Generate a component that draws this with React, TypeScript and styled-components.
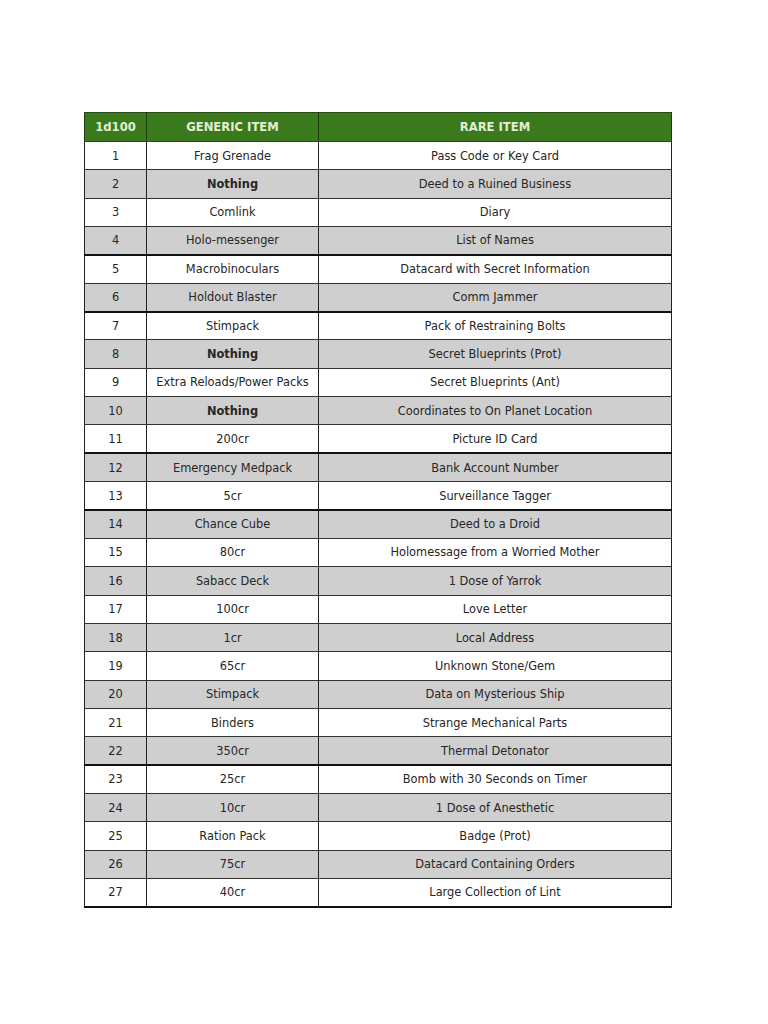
import styled, { createGlobalStyle } from "styled-components"

const GlobalStyle = createGlobalStyle`
    html, body {
        margin: 0;
        padding: 0;
        background: #ffffff;
    }
    body {
        font-family: "DejaVu Sans", Verdana, sans-serif;
    }
`

type Row = { roll: number; generic: string; rare: string; bold?: boolean; thick?: boolean }

const rows: Row[] = [
    { roll: 1, generic: "Frag Grenade", rare: "Pass Code or Key Card" },
    { roll: 2, generic: "Nothing", rare: "Deed to a Ruined Business", bold: true },
    { roll: 3, generic: "Comlink", rare: "Diary" },
    { roll: 4, generic: "Holo-messenger", rare: "List of Names" },
    { roll: 5, generic: "Macrobinoculars", rare: "Datacard with Secret Information", thick: true },
    { roll: 6, generic: "Holdout Blaster", rare: "Comm Jammer" },
    { roll: 7, generic: "Stimpack", rare: "Pack of Restraining Bolts", thick: true },
    { roll: 8, generic: "Nothing", rare: "Secret Blueprints (Prot)", bold: true },
    { roll: 9, generic: "Extra Reloads/Power Packs", rare: "Secret Blueprints (Ant)" },
    { roll: 10, generic: "Nothing", rare: "Coordinates to On Planet Location", bold: true },
    { roll: 11, generic: "200cr", rare: "Picture ID Card" },
    { roll: 12, generic: "Emergency Medpack", rare: "Bank Account Number", thick: true },
    { roll: 13, generic: "5cr", rare: "Surveillance Tagger" },
    { roll: 14, generic: "Chance Cube", rare: "Deed to a Droid", thick: true },
    { roll: 15, generic: "80cr", rare: "Holomessage from a Worried Mother" },
    { roll: 16, generic: "Sabacc Deck", rare: "1 Dose of Yarrok" },
    { roll: 17, generic: "100cr", rare: "Love Letter" },
    { roll: 18, generic: "1cr", rare: "Local Address" },
    { roll: 19, generic: "65cr", rare: "Unknown Stone/Gem" },
    { roll: 20, generic: "Stimpack", rare: "Data on Mysterious Ship" },
    { roll: 21, generic: "Binders", rare: "Strange Mechanical Parts" },
    { roll: 22, generic: "350cr", rare: "Thermal Detonator" },
    { roll: 23, generic: "25cr", rare: "Bomb with 30 Seconds on Timer", thick: true },
    { roll: 24, generic: "10cr", rare: "1 Dose of Anesthetic" },
    { roll: 25, generic: "Ration Pack", rare: "Badge (Prot)" },
    { roll: 26, generic: "75cr", rare: "Datacard Containing Orders" },
    { roll: 27, generic: "40cr", rare: "Large Collection of Lint" },
]

export default function App() {
    return (
        <>
            <GlobalStyle />
            <Page>
                <LootTable>
                    <colgroup>
                        <col style={{ width: 62 }} />
                        <col style={{ width: 172 }} />
                        <col style={{ width: 353 }} />
                    </colgroup>
                    <thead>
                        <tr>
                            <HeadCell>1d100</HeadCell>
                            <HeadCell>GENERIC ITEM</HeadCell>
                            <HeadCell>RARE ITEM</HeadCell>
                        </tr>
                    </thead>
                    <tbody>
                        {rows.map((r, i) => (
                            <BodyRow key={r.roll} $shaded={i % 2 === 1} $thick={!!r.thick}>
                                <Cell>{r.roll}</Cell>
                                <Cell $bold={r.bold}>{r.generic}</Cell>
                                <Cell>{r.rare}</Cell>
                            </BodyRow>
                        ))}
                    </tbody>
                </LootTable>
            </Page>
        </>
    )
}

const Page = styled.div`
    width: 768px;
    height: 1024px;
    padding: 112px 0 0 84px;
    box-sizing: border-box;
`
const LootTable = styled.table`
    width: 588px;
    border-collapse: collapse;
    table-layout: fixed;
    border-bottom: 2px solid #111;
`
const HeadCell = styled.th`
    height: 28px;
    padding: 0;
    background: #3a7a1c;
    color: #e3edd6;
    font-family: "DejaVu Sans", Verdana, sans-serif;
    font-size: 11.6px;
    font-weight: bold;
    text-align: center;
    border: 1px solid #2a4a1a;
    border-left-color: #1e3a10;
    border-right-color: #1e3a10;
`
const BodyRow = styled.tr<{ $shaded: boolean; $thick: boolean }>`
    height: 28.35px;
    background: ${p => (p.$shaded ? "#cfcfcf" : "#ffffff")};
    & > td {
        border-top: ${p => (p.$thick ? "2px solid #111" : "1px solid #333")};
    }
`
const Cell = styled.td<{ $bold?: boolean }>`
    padding: 0;
    text-align: center;
    color: #262626;
    font-size: 11.4px;
    font-weight: ${p => (p.$bold ? "bold" : "normal")};
    border-left: 1px solid #222;
    border-right: 1px solid #222;
    border-bottom: 1px solid #333;
`
